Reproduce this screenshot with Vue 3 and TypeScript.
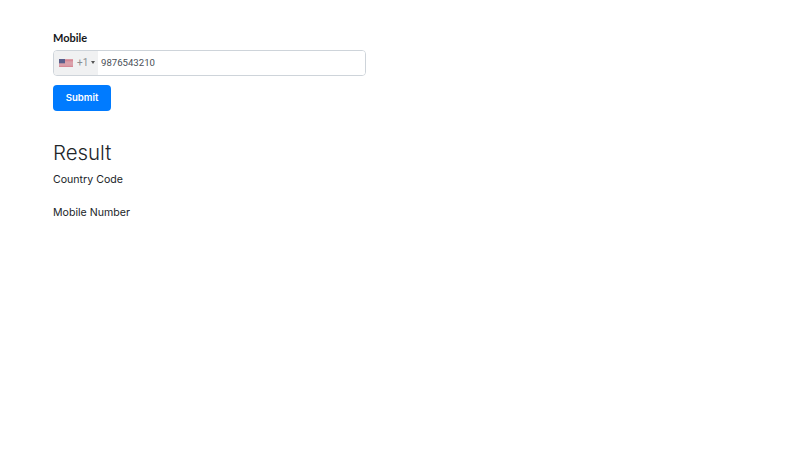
<script setup lang="ts">
const results: string[] = ['Country Code', 'Mobile Number']
</script>

<template>
  <main class="page">
    <form class="form" @submit.prevent>
      <label class="label" for="mobile">Mobile</label>
      <div class="phone">
        <div class="dial">
          <svg class="flag" viewBox="0 0 14 8" width="14" height="8" aria-hidden="true">
            <rect width="14" height="8" fill="#e8dfe4" />
            <path d="M0 .3h14M0 1.5h14M0 2.7h14M0 3.9h14M0 5.1h14M0 6.3h14M0 7.5h14" stroke="#cf6474" stroke-width=".7" />
            <rect width="6" height="4.3" fill="#5a5f8c" />
          </svg>
          <span class="code">+1</span>
          <span class="caret"></span>
        </div>
        <input id="mobile" class="input" type="tel" value="9876543210" />
      </div>
      <button class="submit" type="submit">Submit</button>
    </form>
    <section class="result">
      <h2 class="title">Result</h2>
      <p v-for="item in results" :key="item" class="line">{{ item }}</p>
    </section>
  </main>
</template>

<style>
html, body { margin: 0; background: #fff; }
</style>

<style scoped>
.page {
  width: 800px;
  height: 450px;
  box-sizing: border-box;
  padding: 31px 0 0 53px;
  overflow: hidden;
  font-family: "Inter", "Liberation Sans", sans-serif;
  color: #212529;
}
.form { display: flex; flex-direction: column; align-items: flex-start; }
.label {
  font-family: "Lato", sans-serif;
  font-weight: 700;
  font-size: 11px;
  line-height: 14px;
  color: #16181b;
  margin-bottom: 5px;
}
.phone {
  display: flex;
  width: 313px;
  height: 26px;
  box-sizing: border-box;
  border: 1px solid #ced4da;
  border-radius: 4px;
  overflow: hidden;
}
.dial {
  display: flex;
  align-items: center;
  width: 44px;
  flex: none;
  box-sizing: border-box;
  padding: 0 0 1px 5px;
  background: #f0f1f2;
}
.flag { flex: none; }
.code {
  margin-left: 4px;
  font-family: "Roboto", sans-serif;
  font-size: 10px;
  color: #8a8f94;
}
.caret {
  margin-left: 3px;
  border-left: 2px solid transparent;
  border-right: 2px solid transparent;
  border-top: 3px solid #555;
}
.input {
  flex: 1;
  min-width: 0;
  border: 0;
  outline: 0;
  padding: 0 0 2px 3px;
  font-family: "Roboto", sans-serif;
  font-size: 9.6px;
  color: #495057;
  background: #fff;
}
.submit {
  width: 58px;
  height: 26px;
  margin-top: 9px;
  padding: 0 0 1px;
  border: 0;
  border-radius: 4px;
  background: #007bff;
  color: #fff;
  font-family: "Inter", sans-serif;
  font-weight: 600;
  font-size: 9.6px;
}
.result { margin-top: 28px; }
.title {
  margin: 0;
  font-weight: 300;
  font-size: 20.4px;
  line-height: 28px;
  color: #212529;
}
.line {
  margin: 0 0 17px;
  font-size: 10.6px;
  line-height: 16px;
  color: #212529;
}
.title + .line { margin-top: 5px; }
</style>
